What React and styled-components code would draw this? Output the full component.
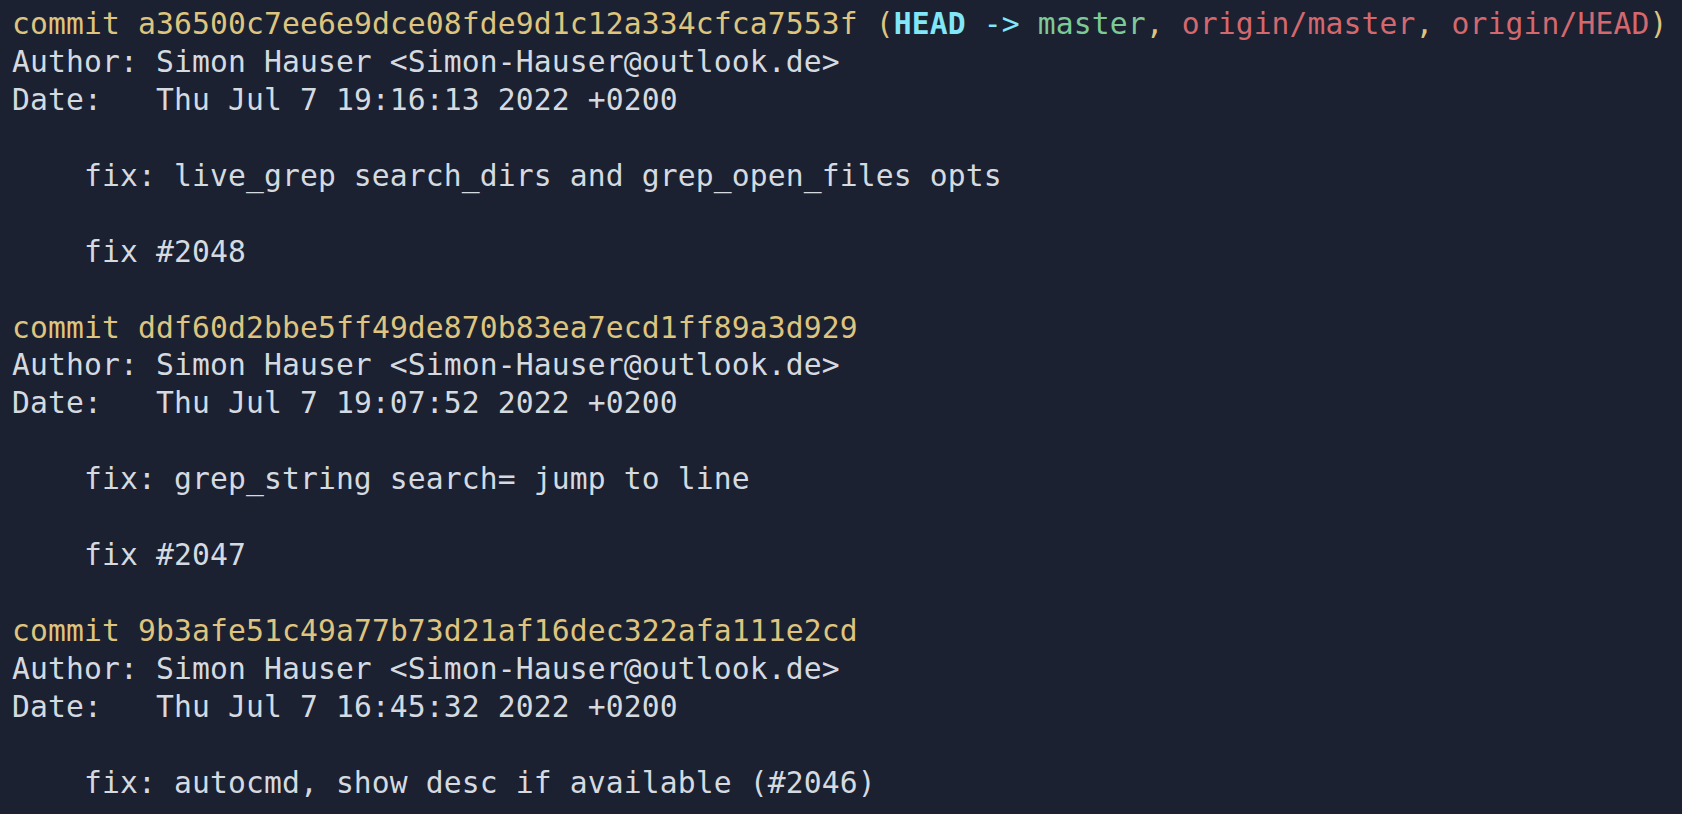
import { createGlobalStyle, styled } from "styled-components";

const GlobalStyle = createGlobalStyle`
    html, body {
        margin: 0;
        padding: 0;
        background-color: #1b2130;
    }
`;

const Terminal = styled.div`
    min-height: 814px;
    box-sizing: border-box;
    background-color: #1b2130;
    color: #d5dae1;
    padding: 5px 12px 0;
    font-family: "DejaVu Sans Mono", "Liberation Mono", monospace;
    font-size: 29.7px;
    letter-spacing: 0.12px;
    line-height: 37.95px;
    white-space: pre;
    overflow: hidden;
`;

const Line = styled.div`
    height: 37.95px;
`;

const Span = styled.span`
    color: ${(p) => p.$color || "inherit"};
    font-weight: ${(p) => (p.$bold ? "bold" : "normal")};
`;

const yellow = "#dec47f";
const cyan = "#80e6f8";
const green = "#7dca98";
const red = "#d4686f";

const commits = [
    {
        hash: "a36500c7ee6e9dce08fde9d1c12a334cfca7553f",
        refs: true,
        date: "Thu Jul 7 19:16:13 2022 +0200",
        body: ["fix: live_grep search_dirs and grep_open_files opts", "", "fix #2048"],
    },
    {
        hash: "ddf60d2bbe5ff49de870b83ea7ecd1ff89a3d929",
        date: "Thu Jul 7 19:07:52 2022 +0200",
        body: ["fix: grep_string search= jump to line", "", "fix #2047"],
    },
    {
        hash: "9b3afe51c49a77b73d21af16dec322afa111e2cd",
        date: "Thu Jul 7 16:45:32 2022 +0200",
        body: ["fix: autocmd, show desc if available (#2046)"],
    },
];

function Refs() {
    return (
        <>
            <Span $color={yellow}> (</Span>
            <Span $color={cyan} $bold>HEAD</Span>
            <Span $color={cyan}> -&gt; </Span>
            <Span $color={green}>master</Span>
            <Span $color={yellow}>, </Span>
            <Span $color={red}>origin/master</Span>
            <Span $color={yellow}>, </Span>
            <Span $color={red}>origin/HEAD</Span>
            <Span $color={yellow}>)</Span>
        </>
    );
}

function Commit({ commit, last }) {
    return (
        <>
            <Line>
                <Span $color={yellow}>commit {commit.hash}</Span>
                {commit.refs && <Refs />}
            </Line>
            <Line>Author: Simon Hauser &lt;Simon-Hauser@outlook.de&gt;</Line>
            <Line>Date:   {commit.date}</Line>
            <Line> </Line>
            {commit.body.map((b, i) => (
                <Line key={i}>{b ? "    " + b : " "}</Line>
            ))}
            {!last && <Line> </Line>}
        </>
    );
}

export default function App() {
    return (
        <>
            <GlobalStyle />
            <Terminal>
                {commits.map((c, i) => (
                    <Commit key={c.hash} commit={c} last={i === commits.length - 1} />
                ))}
            </Terminal>
        </>
    );
}
